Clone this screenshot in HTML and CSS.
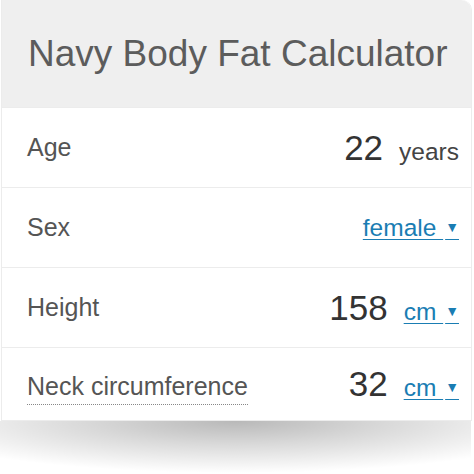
FILE: index.html
```
<!DOCTYPE html>
<html lang="en">
<head>
  <meta charset="UTF-8" />
  <title>Navy Body Fat Calculator</title>
  <link rel="stylesheet" href="styles.css">
</head>
<body>
  <div class="calculator">
    <div class="calc-header">Navy Body Fat Calculator</div>

    <div class="calc-row">
      <span class="label">Age</span>
      <span class="value">
        <span class="number">22</span>
        <span class="unit">years</span>
      </span>
    </div>

    <div class="calc-row">
      <span class="label">Sex</span>
      <span class="value">
        <a class="select-link" href="#">female <span class="caret">▼</span></a>
      </span>
    </div>

    <div class="calc-row">
      <span class="label">Height</span>
      <span class="value">
        <span class="number">158</span>
        <a class="select-link" href="#">cm <span class="caret">▼</span></a>
      </span>
    </div>

    <div class="calc-row last">
      <span class="label hint">Neck circumference</span>
      <span class="value">
        <span class="number">32</span>
        <a class="select-link" href="#">cm <span class="caret">▼</span></a>
      </span>
    </div>
  </div>
  <div class="card-shadow"></div>
</body>
</html>
```

FILE: styles.css
```
body {
  margin: 0;
  background: #fff;
  font-family: 'Liberation Sans', Arial, sans-serif;
}

.calculator {
  width: 469px;
  margin-left: 1px;
  background: #fff;
  border: 1px solid #ececec;
  border-top: none;
  border-radius: 0 10px 0 0;
}

/* soft shadow under the card */
.card-shadow {
  width: 471px;
  height: 52px;
  background: radial-gradient(ellipse 72% 100% at 50% 0, rgba(0,0,0,0.28), rgba(0,0,0,0.15) 45%, rgba(0,0,0,0) 100%);
}

.calc-header {
  height: 107px;
  background: #efefef;
  color: #5c5c5c;
  font-size: 37px;
  padding-left: 26px;
  display: flex;
  align-items: center;
  box-sizing: border-box;
  border-radius: 0 10px 0 0;
}

.calc-row {
  height: 80px;
  display: flex;
  justify-content: space-between;
  align-items: center;
  padding: 0 12px 0 25px;
  border-top: 1px solid #ececec;
  box-sizing: border-box;
}

.calc-row.last {
  height: 73px;
}

.label {
  font-size: 25px;
  color: #555;
}

.label.hint {
  border-bottom: 1px dotted #888;
  padding-bottom: 3px;
  margin-top: 8px;
}

.value {
  display: flex;
  align-items: baseline;
  gap: 16px;
}

.number {
  font-size: 35px;
  color: #333;
}

.unit {
  font-size: 24.5px;
  color: #444;
}

.select-link {
  font-size: 24.5px;
  color: #1a7db3;
  text-decoration: underline;
  text-underline-offset: 3px;
  text-decoration-thickness: 1px;
}

.caret {
  font-size: 14px;
  vertical-align: 4px;
  margin-left: 2px;
}
```
